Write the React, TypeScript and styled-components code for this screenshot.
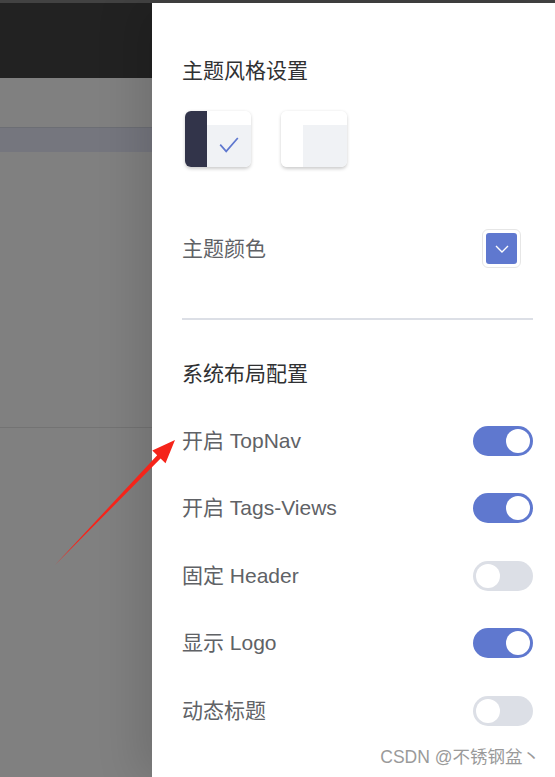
import React from "react";
import styled, { createGlobalStyle } from "styled-components";

const GlobalStyle = createGlobalStyle`
  html, body { margin: 0; padding: 0; background: #808080; }
  body { font-family: "Liberation Sans", "Noto Sans CJK SC", Arial, sans-serif; }
  * { box-sizing: border-box; }
`;

const Screen = styled.div`
  position: relative;
  width: 555px;
  height: 777px;
  overflow: hidden;
  display: flex;
  flex-direction: column;
`;

const TopStrip = styled.div`
  height: 3px;
  background: #424242;
  flex: none;
`;

const Body = styled.div`
  flex: 1;
  display: flex;
  min-height: 0;
`;

const Page = styled.div`
  flex: 1;
  display: flex;
  flex-direction: column;
  background: #808080;
`;

const DarkHeader = styled.div`
  height: 75px;
  background: #222222;
  flex: none;
`;

const Spacer = styled.div<{ $h: number }>`
  height: ${(p) => p.$h}px;
  flex: none;
`;

const TagsBand = styled.div`
  height: 25px;
  border-top: 1px solid #6c6e74;
  background: #75767e;
  flex: none;
`;

const ThinLine = styled.div`
  height: 1px;
  background: #737373;
  flex: none;
`;

const Panel = styled.aside`
  position: relative;
  z-index: 1;
  width: 403px;
  flex: none;
  background: #ffffff;
  box-shadow: -14px 0 40px rgba(0, 0, 0, 0.13);
  padding: 52px 22px 0 30px;
  display: flex;
  flex-direction: column;
`;

const SectionTitle = styled.h3<{ $top?: number }>`
  margin: ${(p) => p.$top ?? 0}px 0 0;
  font-size: 21px;
  line-height: 32px;
  font-weight: 400;
  color: #303133;
`;

const StyleRow = styled.div`
  display: flex;
  gap: 30px;
  margin-top: 24px;
  padding-left: 3px;
`;

const StyleCard = styled.div`
  position: relative;
  width: 66px;
  height: 56px;
  border-radius: 6px;
  overflow: hidden;
  box-shadow: 0 1.5px 3.5px rgba(0, 0, 0, 0.2);
  display: grid;
  grid-template-columns: 22px 1fr;
  grid-template-rows: 14px 1fr;
  background: #ffffff;
`;

const CardSide = styled.div<{ $dark: boolean }>`
  grid-row: 1 / 3;
  grid-column: 1;
  background: ${(p) => (p.$dark ? "#32344a" : "#ffffff")};
`;

const CardHead = styled.div`
  grid-row: 1;
  grid-column: 2;
  background: #ffffff;
`;

const CardMain = styled.div`
  grid-row: 2;
  grid-column: 2;
  background: #f0f2f5;
  display: flex;
  align-items: center;
  justify-content: center;
  padding-bottom: 2px;
`;

const Row = styled.div<{ $h: number; $top?: number }>`
  height: ${(p) => p.$h}px;
  margin-top: ${(p) => p.$top ?? 0}px;
  display: flex;
  align-items: center;
  justify-content: space-between;
  flex: none;
`;

const Label = styled.span`
  font-size: 21px;
  line-height: 32px;
  color: #606266;
`;

const ColorBox = styled.div`
  width: 39px;
  height: 39px;
  margin-right: 12px;
  border: 1px solid #e6e6e6;
  border-radius: 6px;
  padding: 3px;
  display: flex;
`;

const ColorFill = styled.div`
  flex: 1;
  border-radius: 3px;
  background: #5f78cf;
  display: flex;
  align-items: center;
  justify-content: center;
`;

const Divider = styled.div<{ $top: number }>`
  height: 2px;
  background: #dcdfe6;
  margin-top: ${(p) => p.$top}px;
  flex: none;
`;

const Track = styled.div<{ $on: boolean }>`
  width: 60px;
  height: 30px;
  border-radius: 15px;
  background: ${(p) => (p.$on ? "#5f78cf" : "#dcdfe6")};
  display: flex;
  align-items: center;
  justify-content: ${(p) => (p.$on ? "flex-end" : "flex-start")};
  padding: 0 3px;
`;

const Knob = styled.div`
  width: 24px;
  height: 24px;
  border-radius: 50%;
  background: #ffffff;
`;

const Watermark = styled.div`
  position: absolute;
  right: 15px;
  bottom: 7px;
  z-index: 3;
  font-family: "Liberation Sans", "Noto Sans CJK SC", Arial, sans-serif;
  font-size: 17.5px;
  line-height: 26px;
  color: #9a9a9a;
  text-shadow: 0 0 2px #ffffff, 0 0 2px #ffffff;
`;

const ArrowLayer = styled.svg`
  position: absolute;
  left: 0;
  top: 0;
  z-index: 2;
  pointer-events: none;
`;

const Switch = ({ on }: { on: boolean }) => (
  <Track $on={on}>
    <Knob />
  </Track>
);

const toggles: { label: string; on: boolean }[] = [
  { label: "开启 TopNav", on: true },
  { label: "开启 Tags-Views", on: true },
  { label: "固定 Header", on: false },
  { label: "显示 Logo", on: true },
  { label: "动态标题", on: false },
];

export default function App() {
  return (
    <>
      <GlobalStyle />
      <Screen>
        <TopStrip />
        <Body>
          <Page>
            <DarkHeader />
            <Spacer $h={49} />
            <TagsBand />
            <Spacer $h={275} />
            <ThinLine />
          </Page>
          <Panel>
            <SectionTitle>主题风格设置</SectionTitle>
            <StyleRow>
              <StyleCard>
                <CardSide $dark />
                <CardHead />
                <CardMain>
                  <svg width="20" height="16" viewBox="0 0 20 16" fill="none">
                    <path d="M1.2 7.6 L7.2 14.4 L18.8 1" stroke="#5f78cf" strokeWidth="1.7" />
                  </svg>
                </CardMain>
              </StyleCard>
              <StyleCard>
                <CardSide $dark={false} />
                <CardHead />
                <CardMain />
              </StyleCard>
            </StyleRow>
            <Row $h={39} $top={62}>
              <Label>主题颜色</Label>
              <ColorBox>
                <ColorFill>
                  <svg width="14" height="8" viewBox="0 0 14 8" fill="none">
                    <path d="M1 1 L7 7 L13 1" stroke="#ffffff" strokeWidth="1.4" />
                  </svg>
                </ColorFill>
              </ColorBox>
            </Row>
            <Divider $top={50} />
            <SectionTitle $top={38}>系统布局配置</SectionTitle>
            <Spacer $h={17} />
            {toggles.map((t) => (
              <Row key={t.label} $h={67.5}>
                <Label>{t.label}</Label>
                <Switch on={t.on} />
              </Row>
            ))}
          </Panel>
        </Body>
        <ArrowLayer width="555" height="777" viewBox="0 0 555 777">
          <polygon
            points="55,565 157.2,455.2 152.3,450.6 175,440 165.5,463.2 160.6,458.6"
            fill="#f5241a"
          />
        </ArrowLayer>
        <Watermark>CSDN @不锈钢盆丶</Watermark>
      </Screen>
    </>
  );
}
